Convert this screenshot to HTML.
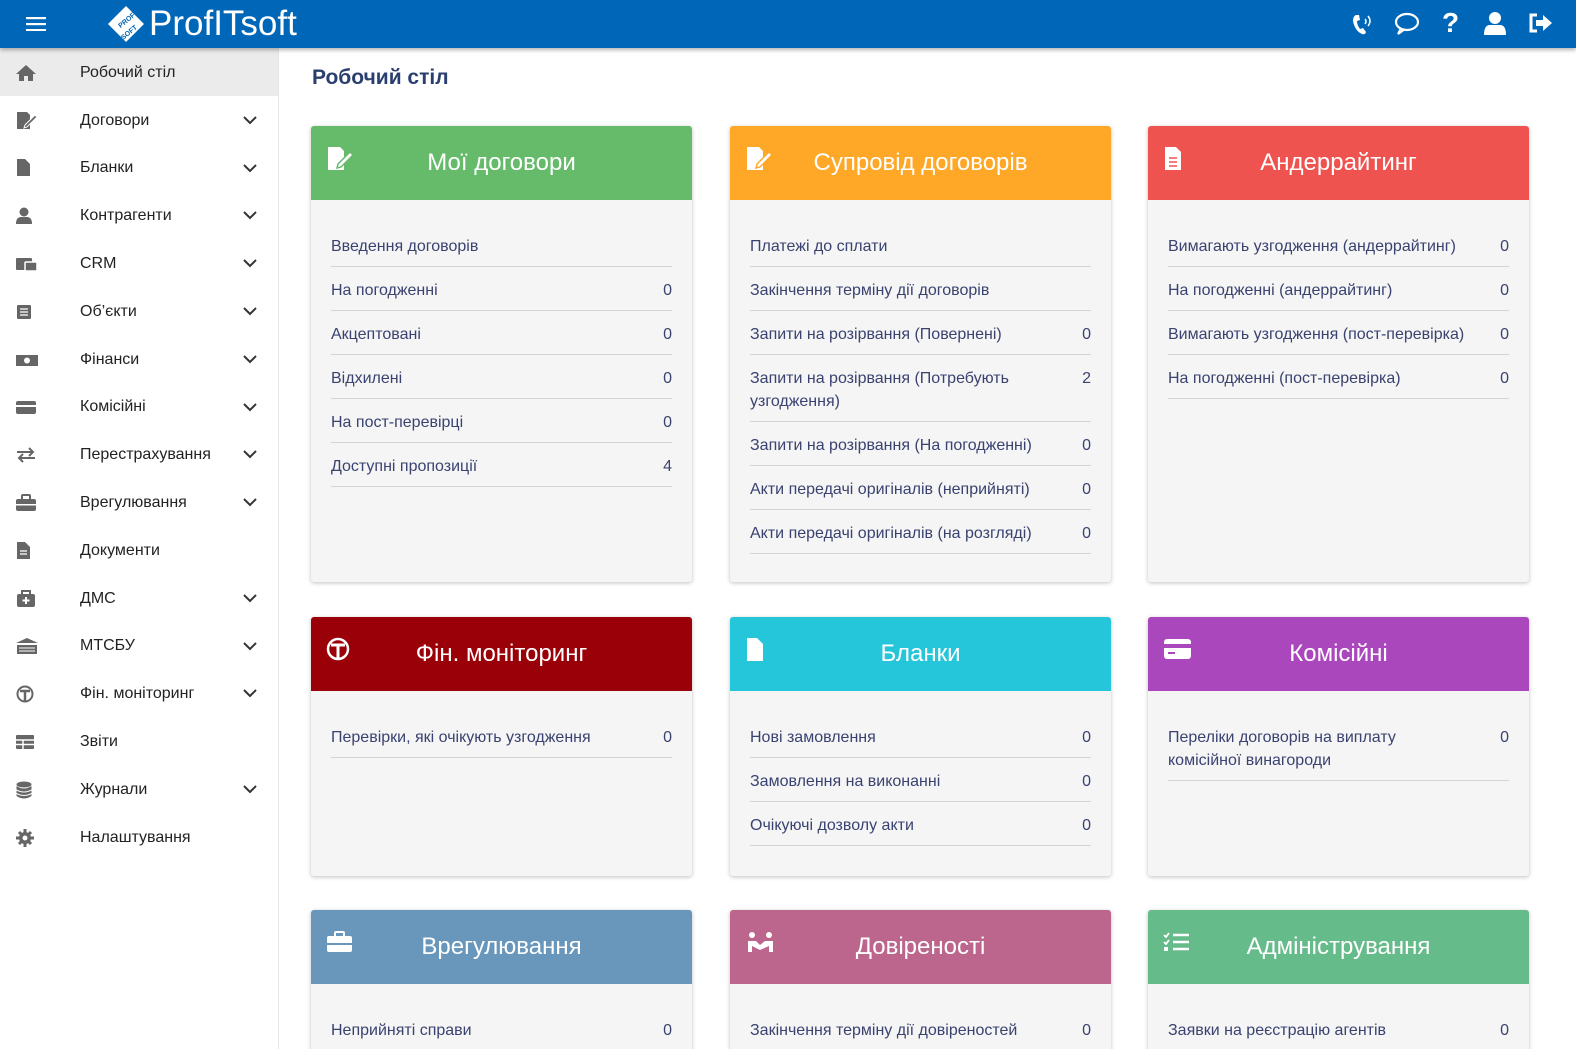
<!DOCTYPE html>
<html><head><meta charset="utf-8"><style>
*{box-sizing:border-box;margin:0;padding:0}
html,body{width:1576px;height:1049px;overflow:hidden}
body{background:#fff;font-family:"Liberation Sans",sans-serif;position:relative}
.top{position:absolute;left:0;top:0;width:1576px;height:48px;background:#0066b8;box-shadow:0 2px 4px rgba(0,0,0,.3);z-index:2}
.side{position:absolute;left:0;top:48px;width:279px;height:1001px;border-right:1px solid #e4e4e4;background:#fff}
.si{height:47.8px;display:flex;align-items:center;font-size:16px;color:#222;position:relative;padding-top:2px}
.si.act{background:#ebebeb}
.si .ic{width:80px;padding-left:16px;display:flex;align-items:center}
.si .ic svg{fill:#666}
.si .ch{position:absolute;left:242px;top:19px;width:16px;height:10px}
h1{position:absolute;left:312px;top:66px;font-size:21px;color:#2a3f6e;font-weight:bold}
.card{position:absolute;width:381px;background:#f5f5f5;border-radius:3px;box-shadow:0 1px 4px rgba(0,0,0,.25);overflow:hidden}
.hd{height:74px;color:#fff;font-size:24px;display:flex;align-items:center;justify-content:center;position:relative}
.hd svg{position:absolute;left:15px;top:20px}
.bd{padding:23px 20px 0 20px}
.r{display:flex;justify-content:space-between;padding:12px 0 8px;line-height:23px;font-size:16px;color:#3a4270;border-bottom:1px solid #d4d4d4}
.r span:first-child{max-width:300px}
</style></head><body>
<div class="top">
<svg style="position:absolute;left:26px;top:17px" width="20" height="14"><rect y="0" width="20" height="2.2" fill="#fff"/><rect y="6" width="20" height="2.2" fill="#fff"/><rect y="12" width="20" height="2.2" fill="#fff"/></svg>
<svg style="position:absolute;left:106px;top:4px" width="42" height="40"><path d="M20 2 L38 20 L20 38 L2 20Z" fill="#fff"/><text x="12" y="23" font-size="7" fill="#0066b8" font-family="Liberation Sans" font-weight="bold" transform="rotate(-40 15 20)">PROF</text><text x="14" y="33" font-size="7" fill="#0066b8" font-family="Liberation Sans" font-weight="bold" transform="rotate(-40 20 30)">SOFT</text></svg>
<div style="position:absolute;left:149px;top:4px;color:#fff;font-size:35px">ProfITsoft</div>
<svg style="position:absolute;left:1352px;top:12px" width="22" height="24"><path d="M4 3 Q1 4 1 9 Q3 19 10 22 Q13 23 14 20 L11 16 L8 17 Q5 13 5 9 L8 8 L7 3Z" fill="#fff"/><path d="M13 7 Q15 9 13 12 M16 4 Q20 9 16 14" stroke="#fff" stroke-width="1.5" fill="none"/></svg>
<svg style="position:absolute;left:1394px;top:12px" width="26" height="24"><ellipse cx="13" cy="10" rx="11" ry="8" stroke="#fff" stroke-width="2.2" fill="none"/><path d="M7 16 L4 22 L11 17" stroke="#fff" stroke-width="2" fill="none"/></svg>
<div style="position:absolute;left:1442px;top:7px;color:#fff;font-size:28px;font-weight:bold">?</div>
<svg style="position:absolute;left:1483px;top:11px" width="24" height="25"><circle cx="12" cy="7" r="6" fill="#fff"/><path d="M1 24 Q1 14 7 14 L17 14 Q23 14 23 24Z" fill="#fff"/></svg>
<svg style="position:absolute;left:1528px;top:12px" width="26" height="22"><path d="M9 3 H3 V19 H9" stroke="#fff" stroke-width="3" fill="none"/><path d="M8 8 H15 V3 L24 11 L15 19 V14 H8Z" fill="#fff"/></svg>
</div>
<div class="side">
<div class="si act"><span class="ic"><svg width="20" height="18"><path d="M10 1 L20 10 H17 V17 H12 V12 H8 V17 H3 V10 H0Z"/></svg></span>Робочий стіл</div>
<div class="si"><span class="ic"><svg width="22" height="18"><path d="M1 0 H11 L14 3 V17 H1Z"/><path d="M9 13 L19 3 L21 5 L11 15 L8 16Z" stroke="#fff" stroke-width="1"/></svg></span>Договори<svg class="ch"><path d="M2 2 L8 8 L14 2" stroke="#333" stroke-width="2" fill="none"/></svg></div>
<div class="si"><span class="ic"><svg width="16" height="18"><path d="M1 0 H9 L14 5 V17 H1Z"/></svg></span>Бланки<svg class="ch"><path d="M2 2 L8 8 L14 2" stroke="#333" stroke-width="2" fill="none"/></svg></div>
<div class="si"><span class="ic"><svg width="18" height="18"><circle cx="8" cy="5" r="4.5"/><path d="M0 17 Q0 10 5 10 H11 Q16 10 16 17Z"/></svg></span>Контрагенти<svg class="ch"><path d="M2 2 L8 8 L14 2" stroke="#333" stroke-width="2" fill="none"/></svg></div>
<div class="si"><span class="ic"><svg width="22" height="18"><rect x="0" y="3" width="16" height="12" rx="1"/><rect x="9" y="7" width="12" height="9" rx="1" stroke="#fff" stroke-width="1.5"/></svg></span>CRM<svg class="ch"><path d="M2 2 L8 8 L14 2" stroke="#333" stroke-width="2" fill="none"/></svg></div>
<div class="si"><span class="ic"><svg width="18" height="18"><rect x="1" y="2" width="14" height="14" rx="1"/><path d="M4 6 H12 M4 9 H12 M4 12 H12" stroke="#fff" stroke-width="1.2"/></svg></span>Об’єкти<svg class="ch"><path d="M2 2 L8 8 L14 2" stroke="#333" stroke-width="2" fill="none"/></svg></div>
<div class="si"><span class="ic"><svg width="22" height="18"><rect x="0" y="4" width="22" height="11"/><circle cx="11" cy="9.5" r="3" fill="#fff"/></svg></span>Фінанси<svg class="ch"><path d="M2 2 L8 8 L14 2" stroke="#333" stroke-width="2" fill="none"/></svg></div>
<div class="si"><span class="ic"><svg width="22" height="18"><rect x="0" y="3" width="20" height="13" rx="2"/><rect x="0" y="7" width="20" height="2" fill="#fff"/></svg></span>Комісійні<svg class="ch"><path d="M2 2 L8 8 L14 2" stroke="#333" stroke-width="2" fill="none"/></svg></div>
<div class="si"><span class="ic"><svg width="22" height="18"><path d="M1 6 H17 M13 2 L17 6 L13 10 M19 12 H3 M7 8 L3 12 L7 16" stroke="#666" stroke-width="2" fill="none"/></svg></span>Перестрахування<svg class="ch"><path d="M2 2 L8 8 L14 2" stroke="#333" stroke-width="2" fill="none"/></svg></div>
<div class="si"><span class="ic"><svg width="22" height="18"><rect x="0" y="5" width="20" height="12" rx="2"/><rect x="6" y="1" width="8" height="5" rx="1" stroke="#666" stroke-width="2" fill="none"/><rect x="0" y="10" width="20" height="1.5" fill="#fff"/></svg></span>Врегулювання<svg class="ch"><path d="M2 2 L8 8 L14 2" stroke="#333" stroke-width="2" fill="none"/></svg></div>
<div class="si"><span class="ic"><svg width="16" height="18"><path d="M1 0 H9 L14 5 V17 H1Z"/><path d="M4 9 H11 M4 12 H11" stroke="#fff" stroke-width="1.2"/></svg></span>Документи</div>
<div class="si"><span class="ic"><svg width="22" height="18"><rect x="1" y="4" width="18" height="13" rx="2"/><rect x="6" y="1" width="8" height="4" stroke="#666" stroke-width="2" fill="none"/><path d="M10 7 V14 M6.5 10.5 H13.5" stroke="#fff" stroke-width="2"/></svg></span>ДМС<svg class="ch"><path d="M2 2 L8 8 L14 2" stroke="#333" stroke-width="2" fill="none"/></svg></div>
<div class="si"><span class="ic"><svg width="24" height="18"><path d="M11 1 L22 6 H0Z"/><rect x="1" y="8" width="20" height="9"/><path d="M3 11 H19 M3 14 H19" stroke="#fff" stroke-width="1"/></svg></span>МТСБУ<svg class="ch"><path d="M2 2 L8 8 L14 2" stroke="#333" stroke-width="2" fill="none"/></svg></div>
<div class="si"><span class="ic"><svg width="20" height="18"><circle cx="9" cy="9" r="7.5" stroke="#666" stroke-width="2" fill="none"/><path d="M4 6 H14 M9 6 V16" stroke="#666" stroke-width="2.5"/></svg></span>Фін. моніторинг<svg class="ch"><path d="M2 2 L8 8 L14 2" stroke="#333" stroke-width="2" fill="none"/></svg></div>
<div class="si"><span class="ic"><svg width="20" height="18"><rect x="0" y="2" width="18" height="14" rx="1"/><path d="M0 7 H18 M0 11.5 H18 M7 7 V16" stroke="#fff" stroke-width="1.5"/></svg></span>Звіти</div>
<div class="si"><span class="ic"><svg width="18" height="18"><ellipse cx="8" cy="3.5" rx="7.5" ry="3"/><path d="M0.5 5 V15 Q8 20 15.5 15 V5 Q8 10 0.5 5Z"/><path d="M0.5 9 Q8 13 15.5 9 M0.5 12.5 Q8 16.5 15.5 12.5" stroke="#fff" stroke-width="1" fill="none"/></svg></span>Журнали<svg class="ch"><path d="M2 2 L8 8 L14 2" stroke="#333" stroke-width="2" fill="none"/></svg></div>
<div class="si"><span class="ic"><svg width="18" height="18"><circle cx="9" cy="9" r="6"/><path d="M9 0 V18 M0 9 H18 M3 3 L15 15 M15 3 L3 15" stroke="#666" stroke-width="3"/><circle cx="9" cy="9" r="2.5" fill="#fff"/></svg></span>Налаштування</div>
</div>
<h1>Робочий стіл</h1>

<div class="card" style="left:311px;top:126px;height:456px"><div class="hd" style="background:#66bb6a"><svg width="28" height="26"><path d="M2 1 H14 L18 5 V24 H2Z" fill="#fff"/><path d="M12 18 L24 6 L27 9 L15 21 L11 22Z" fill="#fff" stroke="#66bb6a" stroke-width="1.5"/></svg>Мої договори</div><div class="bd">
<div class="r"><span>Введення договорів</span><span></span></div>
<div class="r"><span>На погодженні</span><span>0</span></div>
<div class="r"><span>Акцептовані</span><span>0</span></div>
<div class="r"><span>Відхилені</span><span>0</span></div>
<div class="r"><span>На пост-перевірці</span><span>0</span></div>
<div class="r"><span>Доступні пропозиції</span><span>4</span></div></div></div>

<div class="card" style="left:730px;top:126px;height:456px"><div class="hd" style="background:#ffa726"><svg width="28" height="26"><path d="M2 1 H14 L18 5 V24 H2Z" fill="#fff"/><path d="M12 18 L24 6 L27 9 L15 21 L11 22Z" fill="#fff" stroke="#ffa726" stroke-width="1.5"/></svg>Супровід договорів</div><div class="bd">
<div class="r"><span>Платежі до сплати</span><span></span></div>
<div class="r"><span>Закінчення терміну дії договорів</span><span></span></div>
<div class="r"><span>Запити на розірвання (Повернені)</span><span>0</span></div>
<div class="r"><span style="max-width:270px">Запити на розірвання (Потребують узгодження)</span><span>2</span></div>
<div class="r"><span>Запити на розірвання (На погодженні)</span><span>0</span></div>
<div class="r"><span>Акти передачі оригіналів (неприйняті)</span><span>0</span></div>
<div class="r"><span>Акти передачі оригіналів (на розгляді)</span><span>0</span></div></div></div>

<div class="card" style="left:1148px;top:126px;height:456px"><div class="hd" style="background:#ef5350"><svg width="20" height="26"><path d="M2 1 H13 L18 6 V24 H2Z" fill="#fff"/><path d="M6 12 H14 M6 16 H14 M6 20 H14" stroke="#ef5350" stroke-width="1.5"/></svg>Андеррайтинг</div><div class="bd">
<div class="r"><span>Вимагають узгодження (андеррайтинг)</span><span>0</span></div>
<div class="r"><span>На погодженні (андеррайтинг)</span><span>0</span></div>
<div class="r"><span>Вимагають узгодження (пост-перевірка)</span><span>0</span></div>
<div class="r"><span>На погодженні (пост-перевірка)</span><span>0</span></div></div></div>

<div class="card" style="left:311px;top:617px;height:259px"><div class="hd" style="background:#9a0007"><svg width="26" height="26"><circle cx="12" cy="12" r="10" stroke="#fff" stroke-width="2.5" fill="none"/><path d="M5 8 H19 M12 8 V22" stroke="#fff" stroke-width="3"/></svg>Фін. моніторинг</div><div class="bd">
<div class="r"><span>Перевірки, які очікують узгодження</span><span>0</span></div></div></div>

<div class="card" style="left:730px;top:617px;height:259px"><div class="hd" style="background:#26c6da"><svg width="20" height="26"><path d="M2 1 H12 L18 7 V24 H2Z" fill="#fff"/></svg>Бланки</div><div class="bd">
<div class="r"><span>Нові замовлення</span><span>0</span></div>
<div class="r"><span>Замовлення на виконанні</span><span>0</span></div>
<div class="r"><span>Очікуючі дозволу акти</span><span>0</span></div></div></div>

<div class="card" style="left:1148px;top:617px;height:259px"><div class="hd" style="background:#ab47bc"><svg width="30" height="26"><rect x="1" y="2" width="27" height="20" rx="3" fill="#fff"/><rect x="1" y="7" width="27" height="4" fill="#ab47bc"/><rect x="5" y="15" width="7" height="2" fill="#ab47bc"/></svg>Комісійні</div><div class="bd">
<div class="r"><span>Переліки договорів на виплату комісійної винагороди</span><span>0</span></div></div></div>

<div class="card" style="left:311px;top:910px;height:160px"><div class="hd" style="background:#6897bb"><svg width="28" height="26"><rect x="1" y="6" width="25" height="16" rx="2" fill="#fff"/><rect x="9" y="2" width="9" height="5" rx="1" stroke="#fff" stroke-width="2" fill="none"/><rect x="1" y="13" width="25" height="2" fill="#6897bb"/></svg>Врегулювання</div><div class="bd">
<div class="r"><span>Неприйняті справи</span><span>0</span></div></div></div>

<div class="card" style="left:730px;top:910px;height:160px"><div class="hd" style="background:#bc668d"><svg width="32" height="26"><circle cx="7" cy="5" r="3" fill="#fff"/><circle cx="24" cy="5" r="3" fill="#fff"/><path d="M3 22 V11 L11 11 L15 15 L20 11 H28 V22 H24 V16 L15 20 L7 16 V22Z" fill="#fff"/></svg>Довіреності</div><div class="bd">
<div class="r"><span>Закінчення терміну дії довіреностей</span><span>0</span></div></div></div>

<div class="card" style="left:1148px;top:910px;height:160px"><div class="hd" style="background:#66bb8a"><svg width="28" height="26"><path d="M1 5 L3 7 L6 3 M1 12 L3 14 L6 10" stroke="#fff" stroke-width="1.8" fill="none"/><path d="M10 5 H26 M10 12 H26 M10 19 H26" stroke="#fff" stroke-width="2.5"/><rect x="1" y="17" width="4" height="4" fill="#fff"/></svg>Адміністрування</div><div class="bd">
<div class="r"><span>Заявки на реєстрацію агентів</span><span>0</span></div></div></div>
</body></html>
